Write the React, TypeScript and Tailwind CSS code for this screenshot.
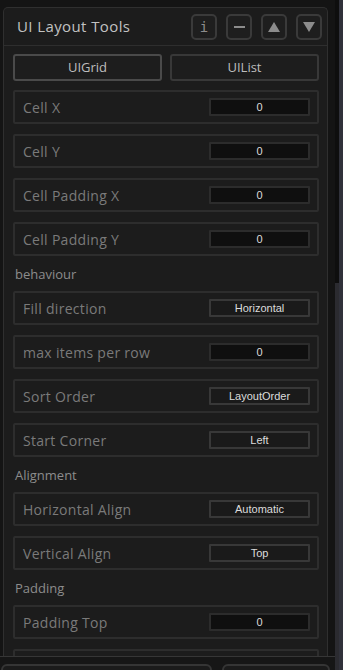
import { ReactNode } from "react";

type Row =
  | { kind: "num"; label: string; value: string }
  | { kind: "enum"; label: string; value: string }
  | { kind: "section"; label: string };

const rows: Row[] = [
  { kind: "num", label: "Cell X", value: "0" },
  { kind: "num", label: "Cell Y", value: "0" },
  { kind: "num", label: "Cell Padding X", value: "0" },
  { kind: "num", label: "Cell Padding Y", value: "0" },
  { kind: "section", label: "behaviour" },
  { kind: "enum", label: "Fill direction", value: "Horizontal" },
  { kind: "num", label: "max items per row", value: "0" },
  { kind: "enum", label: "Sort Order", value: "LayoutOrder" },
  { kind: "enum", label: "Start Corner", value: "Left" },
  { kind: "section", label: "Alignment" },
  { kind: "enum", label: "Horizontal Align", value: "Automatic" },
  { kind: "enum", label: "Vertical Align", value: "Top" },
  { kind: "section", label: "Padding" },
  { kind: "num", label: "Padding Top", value: "0" },
];

const sans = "font-['Open_Sans',sans-serif]";
const arial = "font-['Liberation_Sans',Arial,sans-serif]";

function HeaderButton({ children }: { children: ReactNode }) {
  return (
    <div className="w-[26px] h-[26px] rounded-[5px] border-2 border-[#3a3a3a] bg-[#1e1e1e] flex items-center justify-center text-[#8c8c8c]">
      {children}
    </div>
  );
}

function Field({ row }: { row: Exclude<Row, { kind: "section" }> }) {
  return (
    <div className="h-[34px] shrink-0 rounded-[2px] border-2 border-[#2d2d2d] bg-[#1c1c1c] flex items-center justify-between pl-[8px] pr-[7px]">
      <span className={`${sans} text-[14px] tracking-[0.3px] text-[#7a7a7a]`}>{row.label}</span>
      <div
        className={`w-[101px] h-[18px] border-2 rounded-[1px] flex items-center justify-center ${arial} text-[11px] text-[#dcdcdc] ${
          row.kind === "num" ? "bg-[#0f0f0f] border-[#2c2c2c]" : "bg-[#1a1a1a] border-[#383838]"
        }`}
      >
        {row.value}
      </div>
    </div>
  );
}

export default function App() {
  return (
    <div className="w-[343px] h-[670px] overflow-hidden bg-[#141414] flex">
      <div className="w-[335px] h-full flex flex-col">
        {/* main panel area */}
        <div className="h-[656px] shrink-0 overflow-hidden">
          <div className="ml-[3px] mt-[7px] w-[325px] rounded-t-[5px] border-x border-t border-[#2f2f2f] bg-[#1c1c1c]">
            <div className="h-[38px] border-b border-[#2e2e2e] flex items-center justify-between pl-[13px] pr-[5px]">
              <span className={`${sans} text-[15px] tracking-[0.4px] text-[#c2c2c2]`}>UI Layout Tools</span>
              <div className="flex gap-[9px]">
                <HeaderButton>
                  <span className="font-['DejaVu_Sans_Mono',monospace] text-[14px] leading-none">i</span>
                </HeaderButton>
                <HeaderButton>
                  <div className="w-[11px] h-[2px] bg-[#8c8c8c]" />
                </HeaderButton>
                <HeaderButton>
                  <svg width="12" height="10" viewBox="0 0 12 10">
                    <path d="M6 0 L12 10 L0 10 Z" fill="#8c8c8c" />
                  </svg>
                </HeaderButton>
                <HeaderButton>
                  <svg width="12" height="10" viewBox="0 0 12 10">
                    <path d="M0 0 L12 0 L6 10 Z" fill="#8c8c8c" />
                  </svg>
                </HeaderButton>
              </div>
            </div>

            <div className="pl-[9px] pr-[8px] pt-[8px] flex flex-col">
              <div className="grid grid-cols-2 gap-[8px] h-[27px]">
                <div className={`rounded-[3px] border-2 border-[#4a4a4a] bg-[#1d1d1d] flex items-center justify-center ${sans} text-[13px] text-[#bdbdbd]`}>
                  UIGrid
                </div>
                <div className={`rounded-[3px] border-2 border-[#383838] bg-[#1d1d1d] flex items-center justify-center ${sans} text-[13px] text-[#bdbdbd]`}>
                  UIList
                </div>
              </div>

              <div className="mt-[9px] flex flex-col gap-[10px]">
                {rows.map((row, i) =>
                  row.kind === "section" ? (
                    <div
                      key={i}
                      className={`h-[15px] pl-[2px] flex items-center pt-[2px] ${sans} text-[13px] text-[#8c8c8c]`}
                    >
                      {row.label}
                    </div>
                  ) : (
                    <Field key={i} row={row} />
                  )
                )}
                {/* next card, mostly hidden under the bottom bar */}
                <div className="h-[34px] shrink-0 rounded-[2px] border-2 border-[#2d2d2d] bg-[#1c1c1c]" />
              </div>
            </div>
          </div>
        </div>

        {/* bottom bar */}
        <div className="flex-1 border-t border-[#363636] bg-[#161616] flex items-start pt-[7px] pl-[1px] gap-[10px]">
          <div className="w-[211px] h-[20px] rounded-t-[6px] border-2 border-[#353535] bg-[#1b1b1b]" />
          <div className="w-[108px] h-[20px] rounded-t-[6px] border-2 border-[#353535] bg-[#1b1b1b]" />
        </div>
      </div>

      {/* scrollbar */}
      <div className="w-[4px] h-full flex flex-col">
        <div className="h-[283px] bg-[#0e0e0e]" />
        <div className="flex-1 bg-[#2b2b30]" />
      </div>
      <div className="w-[4px] h-full bg-[#30313a]" />
    </div>
  );
}
